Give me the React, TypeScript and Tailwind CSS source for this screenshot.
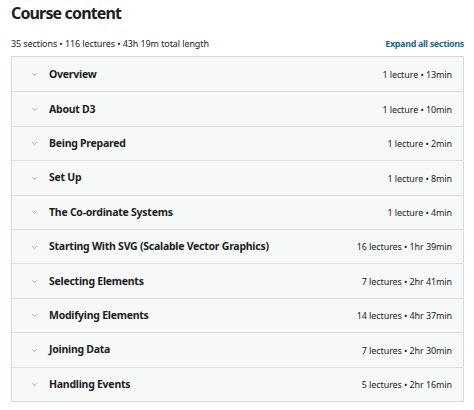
import { ChevronDown } from "lucide-react";

const sections = [
  { title: "Overview", meta: "1 lecture • 13min" },
  { title: "About D3", meta: "1 lecture • 10min" },
  { title: "Being Prepared", meta: "1 lecture • 2min" },
  { title: "Set Up", meta: "1 lecture • 8min" },
  { title: "The Co-ordinate Systems", meta: "1 lecture • 4min" },
  { title: "Starting With SVG (Scalable Vector Graphics)", meta: "16 lectures • 1hr 39min" },
  { title: "Selecting Elements", meta: "7 lectures • 2hr 41min" },
  { title: "Modifying Elements", meta: "14 lectures • 4hr 37min" },
  { title: "Joining Data", meta: "7 lectures • 2hr 30min" },
  { title: "Handling Events", meta: "5 lectures • 2hr 16min" },
];

export default function App() {
  return (
    <div className="w-[474px] h-[410px] overflow-hidden bg-white text-[#1c1d1f] font-['Noto_Sans',sans-serif]">
      <div className="pl-[11px] pr-[10px]">
        <h2 className="text-[16px] font-bold leading-[26px] tracking-[-0.85px]">Course content</h2>
        <div className="mt-[11px] flex items-center justify-between">
          <span className="text-[9px] leading-[14px] tracking-[-0.1px]">35 sections • 116 lectures • 43h 19m total length</span>
          <button className="text-[9px] font-bold leading-[14px] tracking-[-0.35px] text-[#1e6a86]">Expand all sections</button>
        </div>
        <div className="mt-[5px] border border-[#d8dadc] bg-[#f7f8f8]">
          {sections.map((s, i) => (
            <div
              key={s.title}
              className={`flex h-[34.4px] items-center pl-[18px] pr-[11px] ${i > 0 ? "border-t border-[#dcdedf]" : ""}`}
            >
              <ChevronDown className="mt-[1px] h-[9px] w-[9px] text-[#7a7f83]" strokeWidth={1.5} />
              <span className="ml-[10px] flex-1 pt-[1px] text-[10.5px] font-bold tracking-[-0.25px]">{s.title}</span>
              <span className="pt-[1px] text-[9px] tracking-[-0.1px]">{s.meta}</span>
            </div>
          ))}
        </div>
      </div>
    </div>
  );
}
